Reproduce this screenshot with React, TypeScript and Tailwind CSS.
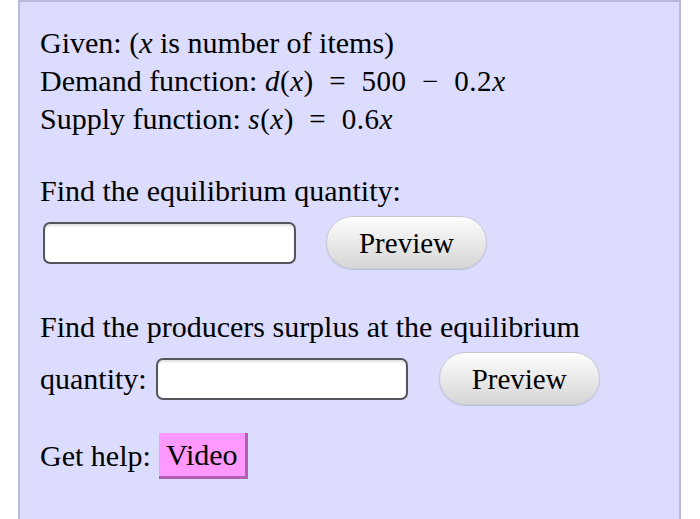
import React from 'react';

function V({ children }: { children: React.ReactNode }) {
  return <span className="italic">{children}</span>;
}

function Math({ children }: { children: React.ReactNode }) {
  return <span className="text-[29px] tracking-[0.5px]">{children}</span>;
}

function Preview() {
  return (
    <button className="h-[53px] w-[161px] rounded-full border border-[#c8c8d4] bg-gradient-to-b from-[#fdfdfd] to-[#d6d6d6] text-[29px] text-black shadow-[0_1px_1px_rgba(0,0,0,0.15)]">
      Preview
    </button>
  );
}

function Answer({ w }: { w: string }) {
  return (
    <input
      className={`h-[42px] ${w} rounded-[7px] border-2 border-[#55555c] bg-white shadow-[inset_0_2px_2px_rgba(0,0,0,0.12)] outline-none`}
    />
  );
}

export default function App() {
  return (
    <div className="min-h-screen w-full bg-white" style={{ fontFamily: '"Liberation Serif", "Times New Roman", serif' }}>
      <div className="ml-[18px] h-[540px] w-[663px] border-2 border-b-0 border-[#b9b9dd] bg-[#dcdcfe] pl-[20px] pt-[22px] text-[30px] leading-[38px] text-black">
        <div>
          Given: (<V>x</V> is number of items)
        </div>
        <div>
          Demand function:{' '}
          <Math>
            <V>d</V>(<V>x</V>) &nbsp;= &nbsp;500 &nbsp;− &nbsp;0.2<V>x</V>
          </Math>
        </div>
        <div>
          Supply function:{' '}
          <Math>
            <V>s</V>(<V>x</V>) &nbsp;= &nbsp;0.6<V>x</V>
          </Math>
        </div>

        <div className="mt-[34px]">Find the equilibrium quantity:</div>
        <div className="mt-[6px] flex items-center gap-[30px] pl-[3px]">
          <Answer w="w-[253px]" />
          <Preview />
        </div>

        <div className="mt-[39px]">Find the producers surplus at the equilibrium</div>
        <div className="mt-[6px] flex items-center">
          <span>quantity:</span>
          <span className="ml-[9px]">
            <Answer w="w-[252px]" />
          </span>
          <span className="ml-[31px]">
            <Preview />
          </span>
        </div>

        <div className="mt-[28px] flex items-center">
          <span>Get help:</span>
          <button className="ml-[8px] h-[46px] w-[89px] border-b-[3px] border-r-[3px] border-[#b060b0] bg-[#ff99ff] text-[30px] text-black">
            Video
          </button>
        </div>
      </div>
    </div>
  );
}
